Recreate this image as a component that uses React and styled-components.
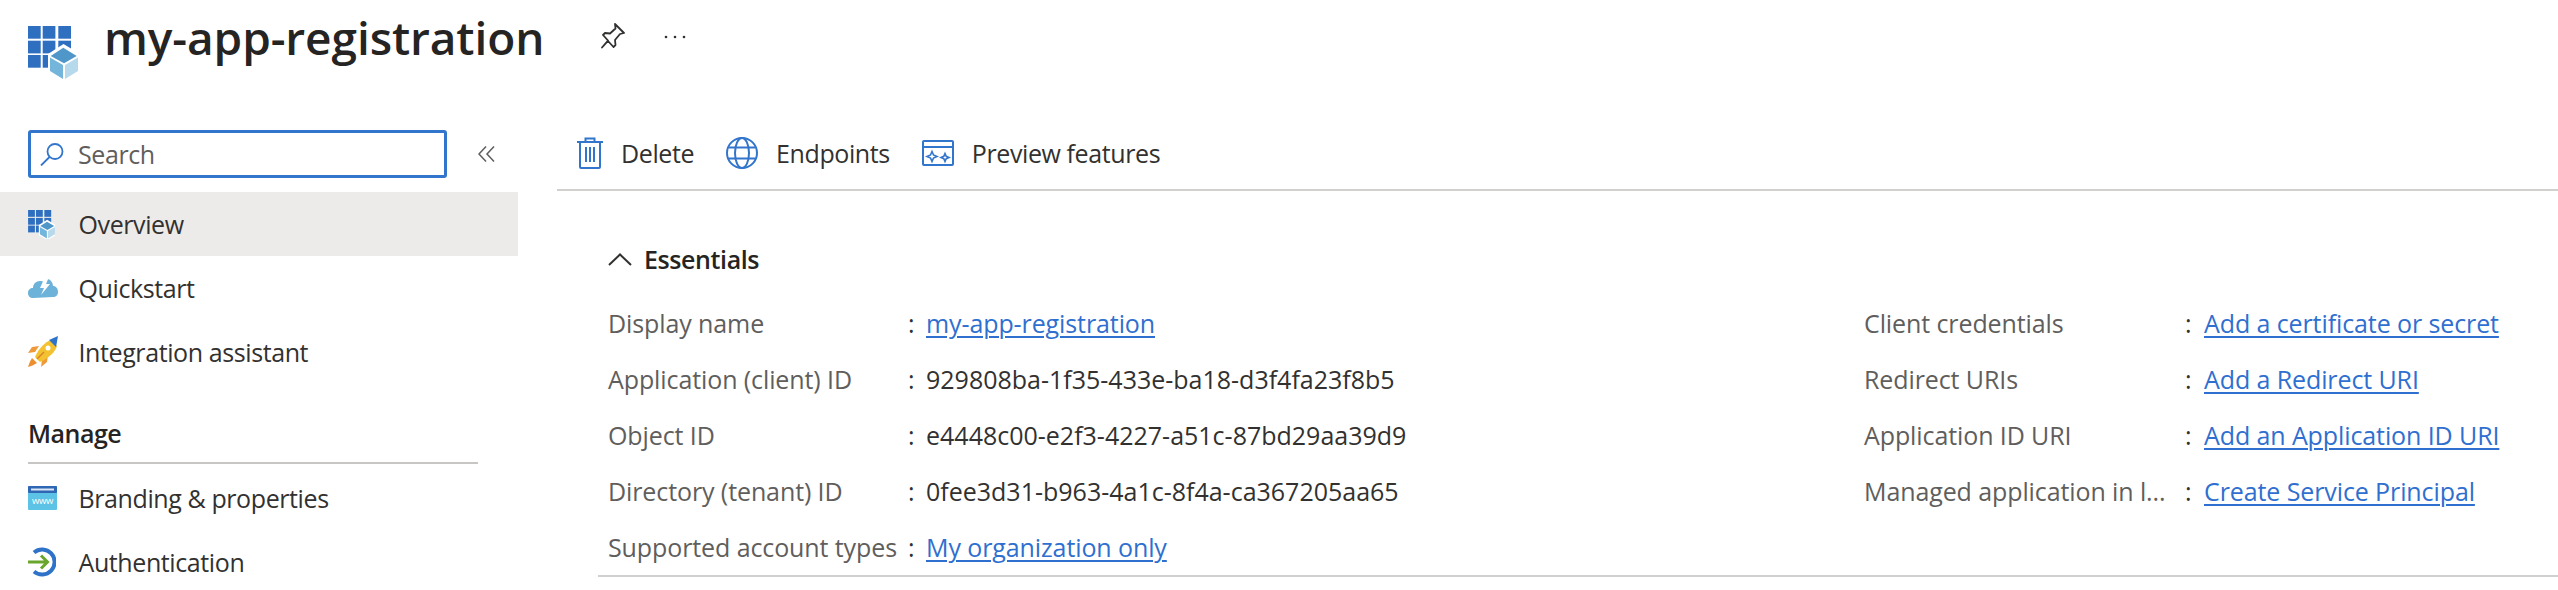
import React from 'react'
import styled, { createGlobalStyle } from 'styled-components'

const GlobalStyle = createGlobalStyle`
  html, body {
    margin: 0;
    background: #fff;
  }
  body {
    font-family: "Open Sans", "Liberation Sans", sans-serif;
    color: #323130;
  }
`

const Page = styled.div`
  width: 2558px;
  height: 590px;
  overflow: hidden;
`

const Header = styled.header`
  display: flex;
  align-items: flex-start;
  height: 130px;
  padding: 26px 0 0 28px;
  box-sizing: border-box;
`

const Title = styled.h1`
  margin: -21px 0 0 26px;
  font-size: 46px;
  line-height: 64px;
  font-weight: 600;
  letter-spacing: -0.1px;
  color: #252423;
`

const PinButton = styled.span`
  display: flex;
  margin: -3px 0 0 54px;
`

const MoreButton = styled.span`
  display: flex;
  margin: 9px 0 0 39px;
`

const Body = styled.div`
  display: flex;
`

const Sidebar = styled.nav`
  flex: 0 0 557px;
`

const SearchRow = styled.div`
  display: flex;
  align-items: center;
  padding-left: 28px;
  margin-bottom: 14px;
`

const SearchBox = styled.label`
  display: flex;
  align-items: center;
  gap: 14px;
  width: 419px;
  height: 48px;
  padding-left: 9px;
  box-sizing: border-box;
  border: 3px solid #3275cc;
  border-radius: 3px;
`

const SearchInput = styled.input`
  flex: 1;
  min-width: 0;
  border: none;
  outline: none;
  background: none;
  padding: 0;
  font: 400 25px "Open Sans", sans-serif;
  letter-spacing: -0.4px;

  &::placeholder {
    color: #605e5c;
    opacity: 1;
  }
`

const CollapseButton = styled.span`
  display: flex;
  margin-left: 31px;
`

const NavItem = styled.a`
  display: flex;
  align-items: center;
  width: 518px;
  height: 64px;
  padding-left: 28px;
  box-sizing: border-box;
  font-size: 25px;
  letter-spacing: -0.4px;
  color: #323130;
  background: ${(p) => (p.$active ? '#edebe9' : 'transparent')};
`

const NavIcon = styled.span`
  display: flex;
  flex: 0 0 50.5px;
`

const NavGroup = styled.div`
  display: flex;
  align-items: flex-end;
  width: 450px;
  height: 80px;
  margin: 0 0 2px 28px;
  padding-bottom: 14px;
  box-sizing: border-box;
  border-bottom: 2px solid #c8c6c4;
  font-size: 25px;
  line-height: 30px;
  font-weight: 600;
  letter-spacing: -0.5px;
  color: #252423;
`

const Main = styled.main`
  flex: 1;
  min-width: 0;
`

const Toolbar = styled.div`
  display: flex;
  align-items: center;
  gap: 32px;
  height: 61px;
  padding: 0 0 14px 20px;
  box-sizing: border-box;
  border-bottom: 2px solid #d2d0ce;
`

const ToolButton = styled.span`
  display: flex;
  align-items: center;
  gap: 18px;
  font-size: 25px;
  letter-spacing: -0.4px;
  color: #323130;
`

const Essentials = styled.section`
  margin: 40px 0 0 41px;
  padding-left: 10px;
  border-bottom: 2px solid #d2d0ce;
`

const EssentialsHeader = styled.div`
  display: flex;
  align-items: center;
  gap: 12px;
  height: 56px;
  margin-bottom: 8px;
  font-size: 25px;
  font-weight: 600;
  letter-spacing: -0.4px;
  color: #252423;
`

const Columns = styled.div`
  display: grid;
  grid-template-columns: 1256px 1fr;
`

const Field = styled.div`
  display: grid;
  grid-template-columns: ${(p) => p.$labelWidth}px ${(p) => p.$colonWidth}px 1fr;
  align-items: center;
  height: 56px;
  font-size: 25px;
`

const FieldLabel = styled.span`
  color: #605e5c;
  white-space: nowrap;
  letter-spacing: -0.1px;
`

const Colon = styled.span`
  color: #323130;
`

const FieldValue = styled.span`
  color: #323130;
  white-space: nowrap;
`

const FieldLink = styled.a`
  color: #2f6fcf;
  white-space: nowrap;
  letter-spacing: -0.1px;
  text-decoration: underline;
  text-decoration-thickness: 2px;
  text-underline-offset: 3px;
`

function AppGridIcon({ width, height }) {
  const cells = []
  ;[0, 14.7, 30.3].forEach((x) => {
    ;[0, 14.7, 29].forEach((y) => {
      cells.push(<rect key={`${x}-${y}`} x={x} y={y} width="12.7" height="12.7" fill="#2f6fc0" />)
    })
  })
  return (
    <svg width={width} height={height} viewBox="0 0 50 54">
      {cells}
      <polygon points="35.5,18 52,28 52,47 36,56 20,47 20,28" fill="#fff" />
      <polygon points="35.3,21.7 48.7,30 36,37.3 22.7,30" fill="#4f97c9" />
      <polygon points="22,31.5 35,39 35,53 22,45" fill="#74b5db" />
      <polygon points="37,39 50,31.5 50,45 37,53" fill="#b6d9eb" />
    </svg>
  )
}

function CloudIcon() {
  return (
    <svg width="30" height="22" viewBox="0 0 30 22">
      <path d="M5 21C2 21 0 19 0 16c0-3 2-5 5-5 0-4 3-7 7-7 1.500 0 3 .5 4 1l-1 2 4-6 1 1c3 1 5 4 5 7 3 0 5 2.500 5 6 0 3-2 5-5 5z" fill="#6db2d8" />
      <polygon points="17,0 12,11 16,11 13,18 22,7 18,7 21,0" fill="#fff" />
    </svg>
  )
}

function RocketIcon() {
  return (
    <svg width="30" height="32" viewBox="0 0 30 32">
      <path d="M11 10L4 11 0 17l7-1z" fill="#ee9a3a" />
      <path d="M20 19l-1 7-6 5 1-7z" fill="#ee9a3a" />
      <path d="M4 22c-2 3-3 6-4 9 3-1 6-2 9-4z" fill="#ee8f2f" />
      <path d="M23 4c-6 2-12 8-16 17l5 5c9-4 15-10 17-16z" fill="#f2c230" />
      <path d="M30 0l-9 4 7 7z" fill="#2f73c9" />
      <circle cx="20" cy="12" r="2.500" fill="#fff" />
      <path d="M9 23l7-7" stroke="#d9822b" strokeWidth="1.500" />
    </svg>
  )
}

function WwwIcon() {
  return (
    <svg width="29" height="24" viewBox="0 0 29 24">
      <rect width="29" height="24" rx="1" fill="#5cc2e6" />
      <rect width="29" height="7" rx="1" fill="#2f67b4" />
      <rect x="3" y="2.500" width="23" height="2" fill="#d8e6f5" />
      <text x="14.500" y="18" textAnchor="middle" fontSize="9.500" fontFamily="Open Sans, sans-serif" fill="#fff">www</text>
    </svg>
  )
}

function AuthIcon() {
  return (
    <svg width="28" height="30" viewBox="0 0 28 30">
      <path d="M6 5.500A12.500 12.500 0 1 1 6 24.500" fill="none" stroke="#2f73c9" strokeWidth="4" />
      <path d="M0 15h19M13 8.500l6.500 6.500-6.500 6.500" fill="none" stroke="#6aa62d" strokeWidth="3" />
    </svg>
  )
}

function SearchIcon() {
  return (
    <svg width="24" height="23" viewBox="0 0 24 23" fill="none" stroke="#3275cc" strokeWidth="1.800">
      <circle cx="15" cy="8.500" r="7.500" />
      <path d="M9.500 14L1 22.500" />
    </svg>
  )
}

function CollapseIcon() {
  return (
    <svg width="17" height="16" viewBox="0 0 17 16" fill="none" stroke="#605e5c" strokeWidth="1.500">
      <path d="M8 .5L1 8l7 7.500M16 .5L9 8l7 7.500" />
    </svg>
  )
}

function PinIcon() {
  return (
    <svg width="27" height="28" viewBox="0 0 27 28" fill="none" stroke="#323130" strokeWidth="1.800" strokeLinejoin="round">
      <path d="M17 1l9 9-4 1-5 6 .5 5-2 2-5.500-6-6 6.500 6-7-5-5.500 2-2 5 .5 5.500-5z" />
    </svg>
  )
}

function DotsIcon() {
  return (
    <svg width="22" height="4" viewBox="0 0 22 4" fill="#323130">
      <circle cx="2" cy="2" r="1.300" />
      <circle cx="11" cy="2" r="1.300" />
      <circle cx="20" cy="2" r="1.300" />
    </svg>
  )
}

function TrashIcon() {
  return (
    <svg width="26" height="32" viewBox="0 0 26 32" fill="none" stroke="#3275cc" strokeWidth="2">
      <path d="M0 5h26M8.500 5V1.500h9V5M3 5v25c0 .8.500 1 1 1h18c.5 0 1-.2 1-1V5M9 10v15M13 10v15M17 10v15" />
    </svg>
  )
}

function GlobeIcon() {
  return (
    <svg width="32" height="32" viewBox="0 0 32 32" fill="none" stroke="#3275cc" strokeWidth="2">
      <circle cx="16" cy="16" r="15" />
      <ellipse cx="16" cy="16" rx="7" ry="15" />
      <path d="M2.500 10.500h27M2.500 21.500h27" />
    </svg>
  )
}

function PreviewIcon() {
  return (
    <svg width="32" height="26" viewBox="0 0 32 26" fill="none" stroke="#3275cc" strokeWidth="2">
      <rect x="1" y="1" width="30" height="24" rx="1" />
      <path d="M1 7h30" />
      <path d="M10 11.500l1.500 3.500 3.500 1.500-3.500 1.500-1.500 3.500-1.500-3.500-3.500-1.500 3.500-1.500zM23 13.500l1.200 2.800 2.800 1.200-2.800 1.200-1.200 2.800-1.200-2.800-2.800-1.200 2.800-1.200z" strokeWidth="1.600" />
    </svg>
  )
}

function ChevronIcon() {
  return (
    <svg width="24" height="13" viewBox="0 0 24 13" fill="none" stroke="#323130" strokeWidth="2">
      <path d="M1 12L12 1.500 23 12" />
    </svg>
  )
}

const navTop = [
  { label: 'Overview', icon: <AppGridIcon width={27} height={29} />, active: true },
  { label: 'Quickstart', icon: <CloudIcon /> },
  { label: 'Integration assistant', icon: <RocketIcon /> },
]

const navManage = [
  { label: 'Branding & properties', icon: <WwwIcon /> },
  { label: 'Authentication', icon: <AuthIcon /> },
]

const leftFields = [
  { label: 'Display name', link: 'my-app-registration' },
  { label: 'Application (client) ID', value: '929808ba-1f35-433e-ba18-d3f4fa23f8b5' },
  { label: 'Object ID', value: 'e4448c00-e2f3-4227-a51c-87bd29aa39d9' },
  { label: 'Directory (tenant) ID', value: '0fee3d31-b963-4a1c-8f4a-ca367205aa65' },
  { label: 'Supported account types', link: 'My organization only' },
]

const rightFields = [
  { label: 'Client credentials', link: 'Add a certificate or secret' },
  { label: 'Redirect URIs', link: 'Add a Redirect URI' },
  { label: 'Application ID URI', link: 'Add an Application ID URI' },
  { label: 'Managed application in l...', link: 'Create Service Principal' },
]

function FieldList({ fields, labelWidth, colonWidth }) {
  return (
    <div>
      {fields.map((f) => (
        <Field key={f.label} $labelWidth={labelWidth} $colonWidth={colonWidth}>
          <FieldLabel>{f.label}</FieldLabel>
          <Colon>:</Colon>
          {f.link ? <FieldLink>{f.link}</FieldLink> : <FieldValue>{f.value}</FieldValue>}
        </Field>
      ))}
    </div>
  )
}

function App() {
  return (
    <Page>
      <GlobalStyle />
      <Header>
        <AppGridIcon width={50} height={54} />
        <Title>my-app-registration</Title>
        <PinButton><PinIcon /></PinButton>
        <MoreButton><DotsIcon /></MoreButton>
      </Header>
      <Body>
        <Sidebar>
          <SearchRow>
            <SearchBox>
              <SearchIcon />
              <SearchInput placeholder="Search" />
            </SearchBox>
            <CollapseButton><CollapseIcon /></CollapseButton>
          </SearchRow>
          {navTop.map((n) => (
            <NavItem key={n.label} $active={n.active}>
              <NavIcon>{n.icon}</NavIcon>
              {n.label}
            </NavItem>
          ))}
          <NavGroup>Manage</NavGroup>
          {navManage.map((n) => (
            <NavItem key={n.label}>
              <NavIcon>{n.icon}</NavIcon>
              {n.label}
            </NavItem>
          ))}
        </Sidebar>
        <Main>
          <Toolbar>
            <ToolButton><TrashIcon />Delete</ToolButton>
            <ToolButton><GlobeIcon />Endpoints</ToolButton>
            <ToolButton><PreviewIcon />Preview features</ToolButton>
          </Toolbar>
          <Essentials>
            <EssentialsHeader><ChevronIcon />Essentials</EssentialsHeader>
            <Columns>
              <FieldList fields={leftFields} labelWidth={300} colonWidth={18} />
              <FieldList fields={rightFields} labelWidth={321} colonWidth={19} />
            </Columns>
          </Essentials>
        </Main>
      </Body>
    </Page>
  )
}

export default App
